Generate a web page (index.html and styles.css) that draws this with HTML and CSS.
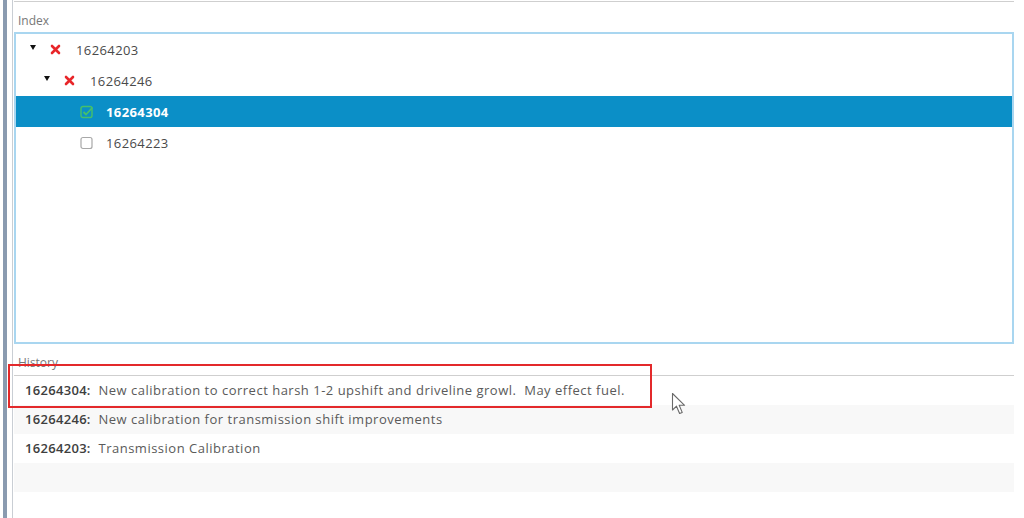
FILE: index.html
```html
<!DOCTYPE html>
<html>
<head>
<meta charset="utf-8">
<link rel="stylesheet" href="styles.css">
</head>
<body>
<div class="app">
  <div class="rail"></div>
  <div class="main">
    <div class="topline"></div>
    <div class="label label-index">Index</div>
    <div class="tree">
      <div class="row lvl0">
        <span class="caret"></span>
        <svg class="icon" width="11" height="11" viewBox="0 0 11 11"><path d="M2 2 L9 9 M9 2 L2 9" stroke="#e8262a" stroke-width="2.6" stroke-linecap="round"/></svg>
        <span class="txt">16264203</span>
      </div>
      <div class="row lvl1">
        <span class="caret"></span>
        <svg class="icon" width="11" height="11" viewBox="0 0 11 11"><path d="M2 2 L9 9 M9 2 L2 9" stroke="#e8262a" stroke-width="2.6" stroke-linecap="round"/></svg>
        <span class="txt">16264246</span>
      </div>
      <div class="row lvl2 selected">
        <svg class="icon box" width="14" height="14" viewBox="0 0 14 14"><rect x="1" y="1.5" width="11" height="11" rx="2" fill="none" stroke="#46c06a" stroke-width="1.4"/><path d="M3.5 7 L6 9.5 L12.5 2.5" fill="none" stroke="#46c06a" stroke-width="1.8"/></svg>
        <span class="txt">16264304</span>
      </div>
      <div class="row lvl2">
        <svg class="icon box" width="14" height="14" viewBox="0 0 14 14"><rect x="1" y="1.5" width="11" height="11" rx="2" fill="#fff" stroke="#a8a8a8" stroke-width="1.2"/></svg>
        <span class="txt">16264223</span>
      </div>
    </div>
    <div class="label label-history">History</div>
    <div class="history">
      <div class="hrow"><b>16264304:</b>&nbsp; New calibration to correct harsh 1-2 upshift and driveline growl.&nbsp; May effect fuel.</div>
      <div class="hrow alt"><b>16264246:</b>&nbsp; New calibration for transmission shift improvements</div>
      <div class="hrow"><b>16264203:</b>&nbsp; Transmission Calibration</div>
      <div class="hrow alt"></div>
      <div class="hrow"></div>
    </div>
  </div>
</div>
<div class="highlight"></div>
<svg class="cursor" width="16" height="24" viewBox="0 0 16 24"><path d="M1.5 1.5 L1.5 18 L5.5 14.2 L8.6 21.5 L11.2 20.4 L8.2 13.3 L13.6 13.3 Z" fill="#fff" stroke="#6a6a6a" stroke-width="1.1" stroke-linejoin="round"/></svg>
</body>
</html>
```
FILE: styles.css
```css
html, body {
  margin: 0;
  padding: 0;
  background: #fff;
  height: 518px;
  overflow: hidden;
}
body {
  font-family: "Open Sans", "Liberation Sans", sans-serif;
  font-size: 12px;
  color: #555;
  position: relative;
}
.app {
  display: flex;
  height: 518px;
}
.rail {
  width: 4px;
  margin-left: 3px;
  background: #8a9bb0;
}
.main {
  margin-left: 5px;
  border-left: 1px solid #c9ced4;
  width: 1000px;
  display: flex;
  flex-direction: column;
  padding-left: 1px;
  overflow: hidden;
}
.main > * {
  flex: none;
}
.topline {
  height: 1px;
  border-bottom: 1px solid #cfcfcf;
}
.label {
  color: #777;
  font-size: 12px;
  line-height: 16px;
  padding-left: 4px;
}
.label-index {
  margin-top: 11px;
  margin-bottom: 3px;
}
.tree {
  border: 2px solid #a9d6f0;
  height: 308px;
  box-sizing: content-box;
}
.row {
  height: 31px;
  display: flex;
  align-items: center;
  color: #4a4a4a;
  font-size: 13px;
}
.row .txt {
  letter-spacing: 0.4px;
}
.lvl0 { padding-left: 14px; }
.lvl1 { padding-left: 28px; }
.lvl2 { padding-left: 64px; }
.caret {
  width: 0;
  height: 0;
  border-left: 3.5px solid transparent;
  border-right: 3.5px solid transparent;
  border-top: 5px solid #111;
  margin-right: 14px;
  margin-top: -5px;
}
.icon {
  margin-right: 15px;
  flex: none;
}
.icon.box {
  margin-right: 12px;
}
.selected {
  background: #0b8fc7;
  color: #fff;
  font-weight: bold;
}
.label-history {
  margin-top: 11px;
  margin-bottom: 4px;
  height: 16px;
}
.history {
  border-top: 1px solid #cfcfcf;
}
.hrow {
  height: 29px;
  line-height: 29px;
  padding-left: 11px;
  color: #5a5a5a;
  white-space: nowrap;
  font-size: 13px;
  letter-spacing: 0.5px;
}
.hrow b {
  color: #3e3e3e;
  font-weight: 600;
  letter-spacing: 0.3px;
}
.hrow.alt {
  background: #f8f8f8;
}
.highlight {
  position: absolute;
  left: 8px;
  top: 364px;
  width: 640px;
  height: 40px;
  border: 2px solid #e3292b;
}
.cursor {
  position: absolute;
  left: 671px;
  top: 392px;
}
```
